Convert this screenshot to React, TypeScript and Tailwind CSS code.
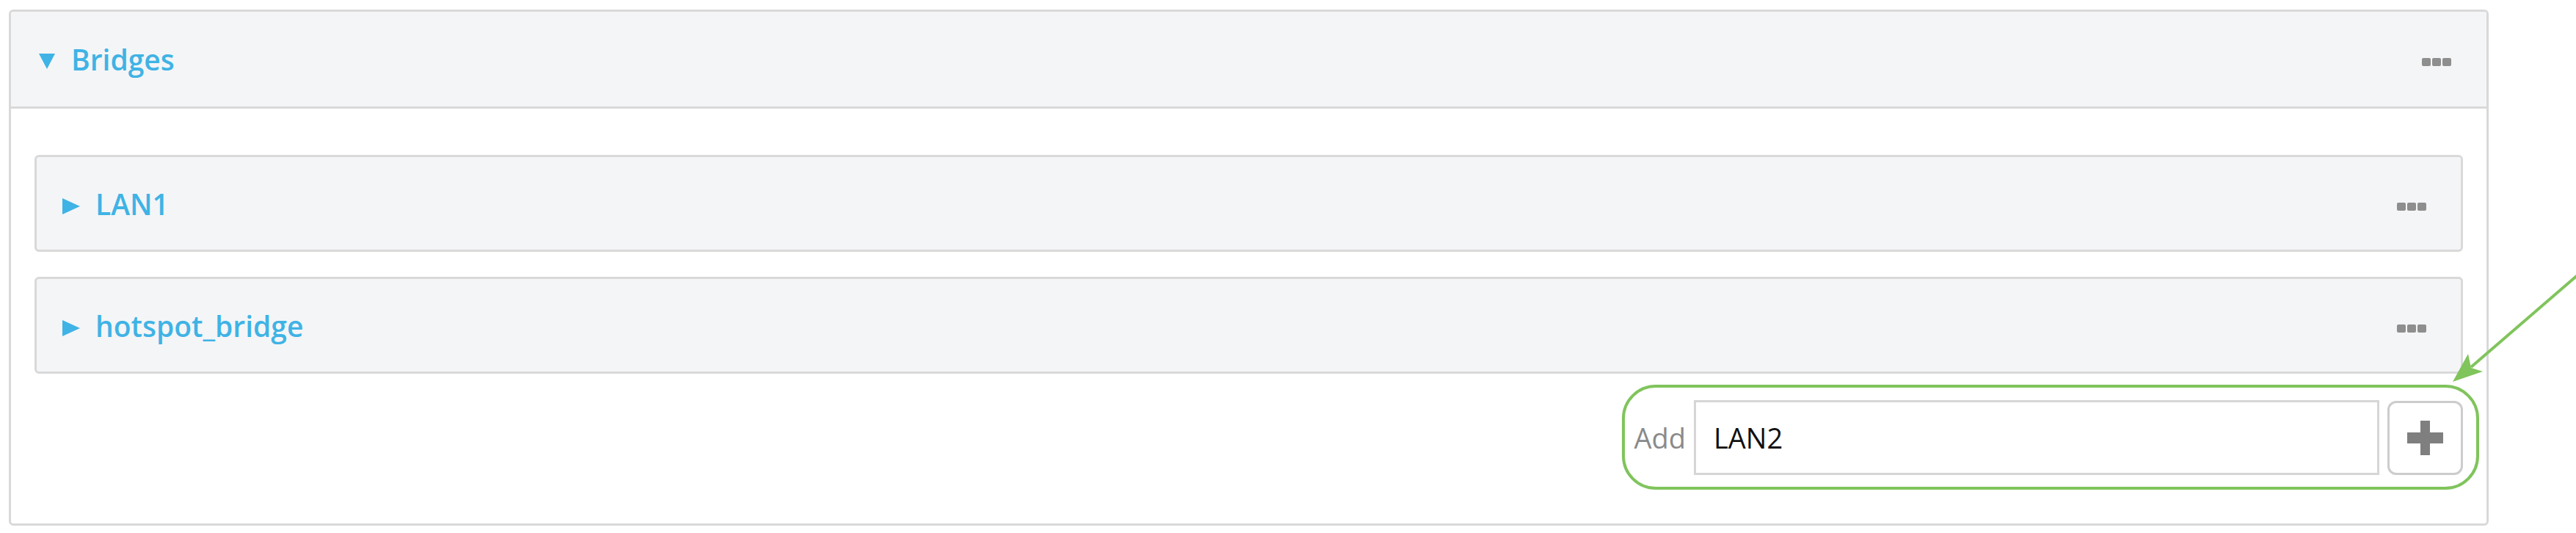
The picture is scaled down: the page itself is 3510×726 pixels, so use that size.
import React from "react";

const blue = "#3fb3e5";

function Dots() {
  return (
    <div className="mt-[8px] flex gap-[2px]">
      <span className="h-[11px] w-[12px] rounded-[2px] bg-[#8e8e8e]" />
      <span className="h-[11px] w-[12px] rounded-[2px] bg-[#8e8e8e]" />
      <span className="h-[11px] w-[12px] rounded-[2px] bg-[#8e8e8e]" />
    </div>
  );
}

function BridgeRow({ name }: { name: string }) {
  return (
    <div className="flex h-[132px] items-center justify-between rounded-[6px] border-[3px] border-[#d9d9d9] bg-[#f4f5f7] pl-[35px] pr-[47px]">
      <div className="flex items-center gap-[21px]">
        <svg className="mt-[8px]" width="24" height="22" viewBox="0 0 24 22">
          <path d="M0 0 L24 11 L0 22 Z" fill={blue} />
        </svg>
        <span className="text-[39px] font-semibold leading-none text-[#3fb3e5]">{name}</span>
      </div>
      <Dots />
    </div>
  );
}

export default function App() {
  return (
    <div className="relative h-[726px] w-[3510px] bg-white pl-[12px] pt-[13px] font-['Open_Sans',sans-serif]">
      <div className="flex h-[703px] w-[3379px] flex-col overflow-hidden rounded-[6px] border-[3px] border-[#d9d9d9]">
        {/* section header */}
        <div className="flex h-[132px] shrink-0 items-center justify-between border-b-[3px] border-[#d9d9d9] bg-[#f4f5f7] pl-[38px] pr-[48px]">
          <div className="flex items-center gap-[22px]">
            <svg className="mt-[5px]" width="22" height="21" viewBox="0 0 22 21">
              <path d="M0 0 L22 0 L11 21 Z" fill={blue} />
            </svg>
            <span className="text-[39px] font-semibold leading-none text-[#3fb3e5]">Bridges</span>
          </div>
          <Dots />
        </div>

        <div className="flex flex-col px-[32px] pt-[63px]">
          <BridgeRow name="LAN1" />
          <div className="mt-[34px]">
            <BridgeRow name="hotspot_bridge" />
          </div>

          <div className="mt-[36px] flex justify-end">
            <div className="relative flex items-center gap-[11px]">
              <span className="text-[38px] leading-none text-[#8a8a8a]">Add</span>
              <input
                readOnly
                value="LAN2"
                className="h-[102px] w-[934px] border-[3px] border-[#d6d6d6] bg-white pl-[24px] text-[38px] text-[#111] outline-none"
              />
              <button className="flex h-[101px] w-[103px] items-center justify-center rounded-[12px] border-[3px] border-[#cccccc] bg-white">
                <svg width="49" height="47" viewBox="0 0 49 47">
                  <rect x="0" y="16" width="49" height="15" fill="#7f7f7f" />
                  <rect x="18" y="0" width="13" height="47" fill="#7f7f7f" />
                </svg>
              </button>
              {/* annotation outline */}
              <div className="pointer-events-none absolute -bottom-[20px] -left-[16px] -right-[22px] -top-[21px] rounded-[46px] border-4 border-[#80c45c]" />
            </div>
          </div>
        </div>
      </div>

      {/* annotation arrow */}
      <svg
        className="pointer-events-none absolute left-[3330px] top-[370px]"
        width="180"
        height="160"
        viewBox="0 0 180 160"
      >
        <line x1="182" y1="5" x2="37" y2="130" stroke="#80c45c" strokeWidth="4" />
        <path d="M12 150 L33 112 L37 131 L53 136 Z" fill="#80c45c" />
      </svg>
    </div>
  );
}
